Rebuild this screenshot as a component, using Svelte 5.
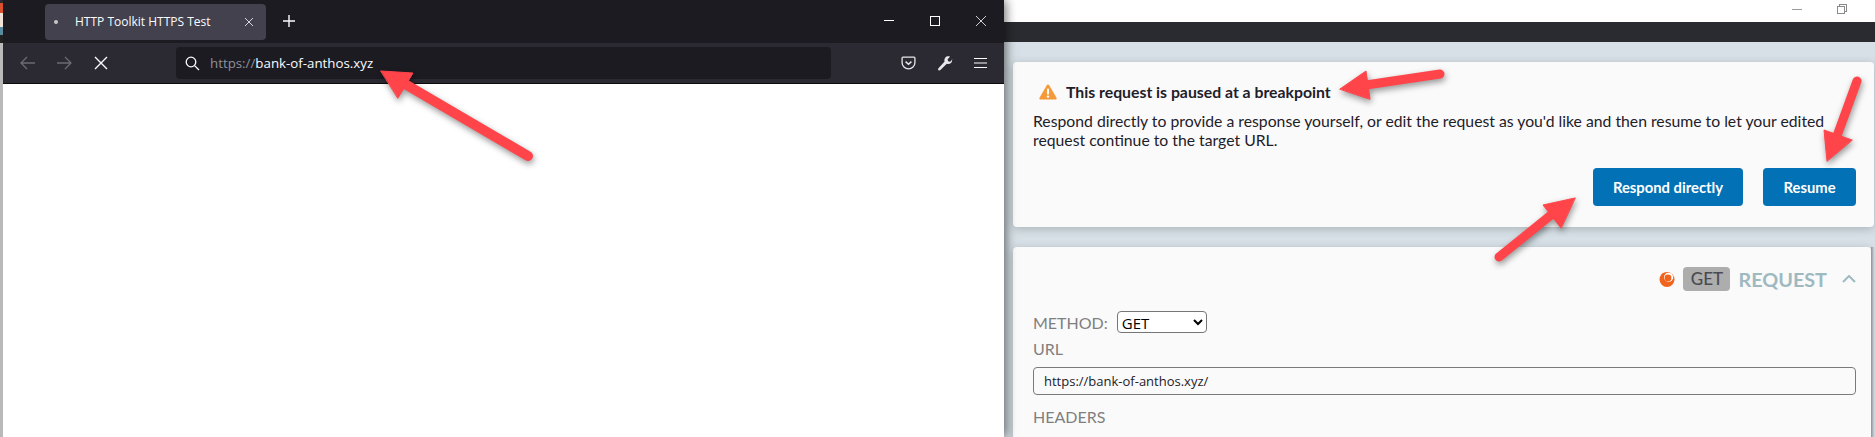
<script>
  let url = 'https://bank-of-anthos.xyz/';
</script>

<div class="screen">
  <div class="browser">
    <div class="edge"><span class="edge-mark"></span></div>
    <div class="window">
      <div class="titlebar">
        <div class="tab">
          <span class="tab-dot"></span>
          <span class="tab-title">HTTP Toolkit HTTPS Test</span>
          <svg class="tab-close" width="10" height="10" viewBox="0 0 10 10" fill="none" stroke="#d8d8dc" stroke-width="1"><path d="M1 1l8 8M9 1l-8 8"/></svg>
        </div>
        <svg class="new-tab" width="12" height="12" viewBox="0 0 12 12" fill="none" stroke="#fbfbfe" stroke-width="1.4"><path d="M6 0v12M0 6h12"/></svg>
        <div class="win-controls">
          <svg width="10" height="10" viewBox="0 0 10 10" fill="none" stroke="#fff"><path d="M0 4.5h10"/></svg>
          <svg width="10" height="10" viewBox="0 0 10 10" fill="none" stroke="#fff"><rect x=".5" y=".5" width="9" height="9"/></svg>
          <svg width="10" height="10" viewBox="0 0 10 10" fill="none" stroke="#fff" stroke-width=".8"><path d="M0 0l10 10M10 0L0 10"/></svg>
        </div>
      </div>
      <div class="toolbar">
        <svg class="nav-icon" width="16" height="14" viewBox="0 0 16 14" fill="none" stroke="#6b6b72" stroke-width="1.3"><path d="M15 7H1M7 1L1 7l6 6"/></svg>
        <svg class="nav-icon" width="16" height="14" viewBox="0 0 16 14" fill="none" stroke="#6b6b72" stroke-width="1.3"><path d="M1 7h14M9 1l6 6-6 6"/></svg>
        <svg class="nav-icon" width="14" height="14" viewBox="0 0 14 14" fill="none" stroke="#fbfbfe" stroke-width="1.4"><path d="M1 1l12 12M13 1L1 13"/></svg>
        <div class="urlbar">
          <svg width="15" height="15" viewBox="0 0 15 15" fill="none" stroke="#fbfbfe" stroke-width="1.3"><circle cx="6" cy="6" r="4.8"/><path d="M9.6 9.6L14 14"/></svg>
          <span class="url-text"><span class="scheme">https://</span>bank-of-anthos.xyz</span>
        </div>
        <div class="tools">
          <svg width="15" height="15" viewBox="0 0 15 15" fill="none" stroke="#e8e8ec" stroke-width="1.3"><path d="M2 1.2h11c.6 0 .9.4.9.9v4.6c0 3.4-2.900 6.100-6.400 6.100S1.100 10.100 1.100 6.700V2.100c0-.5.3-.9.900-.9z"/><path d="M4.600 5.600l2.900 2.700 2.900-2.700" stroke-width="1.500"/></svg>
          <svg width="15" height="15" viewBox="0 0 15 15" fill="#e8e8ec"><path d="M14.600 3.300l-2.500 2.400-2-.5-.5-2L12 .7C10.300 0 8.300.4 7.200 1.800 6.300 2.900 6.100 4.300 6.600 5.600L.5 12.300c-.6.700-.5 1.400 0 1.900s1.300.5 1.900-.1l6.400-6.300c1.500.6 3.200.2 4.400-1 1-1 1.200-2.900.4-3.500z"/></svg>
          <svg width="13" height="12" viewBox="0 0 13 12" fill="none" stroke="#fbfbfe" stroke-width="1.200"><path d="M0 1.500h13M0 6h13M0 10.500h13"/></svg>
        </div>
      </div>
      <div class="page"></div>
    </div>
  </div>

  <div class="app">
    <div class="app-title">
      <svg width="10" height="1" viewBox="0 0 10 1"><path d="M0 .5h10" stroke="#9a9a9a"/></svg>
      <svg width="10" height="10" viewBox="0 0 10 10" fill="#fff" stroke="#8a8a8a"><rect x="2.500" y=".5" width="7" height="7"/><rect x=".5" y="2.500" width="7" height="7"/></svg>
    </div>
    <div class="app-bar"></div>
    <div class="app-content">
      <section class="card notice">
        <h2>
          <svg width="18" height="16" viewBox="0 0 18 16"><path d="M9 .6c.5 0 .9.3 1.200.7l7.300 12.400c.5.900-.1 1.900-1.200 1.900H1.700c-1.100 0-1.700-1-1.200-1.900L7.800 1.300C8.100.9 8.500.6 9 .6z" fill="#f59a3a"/><rect x="8" y="4.500" width="2" height="6" rx=".8" fill="#fff"/><circle cx="9" cy="12.600" r="1.200" fill="#fff"/></svg>
          This request is paused at a breakpoint
        </h2>
        <p>Respond directly to provide a response yourself, or edit the request as you'd like and then resume to let your edited request continue to the target URL.</p>
        <div class="actions">
          <button class="respond">Respond directly</button>
          <button class="resume">Resume</button>
        </div>
      </section>

      <div class="request-row">
        <section class="card request">
          <header>
            <svg width="16" height="16" viewBox="0 0 16 16"><circle cx="8" cy="8.500" r="7.500" fill="#f1641e"/><circle cx="9.600" cy="6.300" r="4.600" fill="#fff"/><circle cx="9" cy="7" r="3.400" fill="#f1641e"/><circle cx="4" cy="3.500" r="1.200" fill="#f1641e"/></svg>
            <span class="method-pill">GET</span>
            <span class="request-title">REQUEST</span>
            <svg class="chevron" width="14" height="8" viewBox="0 0 14 8" fill="none" stroke="#9fb9c1" stroke-width="2"><path d="M1 7l6-6 6 6"/></svg>
          </header>
          <div class="method-row">
            <label for="method">METHOD:</label>
            <select id="method"><option>GET</option><option>POST</option></select>
          </div>
          <div class="label">URL</div>
          <input type="text" bind:value={url} />
          <div class="label headers">HEADERS</div>
        </section>
        <div class="scroll-edge"></div>
      </div>
    </div>
  </div>

  <svg class="arrows" width="1875" height="437" viewBox="0 0 1875 437">
    <g fill="#ff444a" stroke="#ff444a" stroke-linecap="round" stroke-linejoin="round">
      <path d="M528 156L405 84" stroke-width="10" fill="none"/>
      <path d="M381 71l32 2-15 25z" stroke-width="1"/>
      <path d="M1440 74l-74 11" stroke-width="9" fill="none"/>
      <path d="M1340 89l26-18 4 28z" stroke-width="1"/>
      <path d="M1857 81l-20 55" stroke-width="9" fill="none"/>
      <path d="M1827 161l-3-31 28 10z" stroke-width="1"/>
      <path d="M1499 257l52-42" stroke-width="9" fill="none"/>
      <path d="M1575 198l-32 7 18 23z" stroke-width="1"/>
    </g>
  </svg>
</div>

<style>
  :global(body) {
    margin: 0;
    background: #fff;
  }

  .screen {
    position: relative;
    display: flex;
    width: 1875px;
    height: 437px;
    overflow: hidden;
    font-family: Lato, "Open Sans", sans-serif;
  }

  /* browser window on the left */
  .browser {
    position: relative;
    z-index: 2;
    display: flex;
    flex: 0 0 1004px;
    box-shadow: 2px 0 10px rgba(0, 0, 0, 0.55);
  }

  .edge {
    flex: 0 0 3px;
    background: #b9b9b9;
  }

  .edge-mark {
    display: block;
    height: 43px;
    background: linear-gradient(#2a2a2e 0 3px, #d8502c 3px 13px, #f0e4d8 13px 27px, #5a8aa0 27px 35px, #222 35px);
  }

  .window {
    flex: 1;
    display: flex;
    flex-direction: column;
    min-width: 0;
  }

  .titlebar {
    display: flex;
    align-items: center;
    height: 43px;
    padding-left: 42px;
    padding-bottom: 1px;
    box-sizing: border-box;
    background: #1c1b22;
  }

  .tab {
    display: flex;
    align-items: center;
    width: 221px;
    height: 36px;
    margin-top: 1px;
    border-radius: 4px;
    background: #42414d;
    color: #fbfbfe;
    font-family: "Open Sans", sans-serif;
    font-size: 12px;
    box-sizing: border-box;
    padding: 0 0 0 9px;
  }

  .tab-dot {
    width: 4px;
    height: 4px;
    border-radius: 50%;
    background: #c8c8cc;
    margin-right: 17px;
  }

  .tab-title {
    flex: 1;
  }

  .tab-close {
    margin-right: 12px;
  }

  .new-tab {
    margin-left: 17px;
  }

  .win-controls {
    display: flex;
    align-items: center;
    gap: 36px;
    margin-left: auto;
    margin-right: 18px;
  }

  .toolbar {
    display: flex;
    align-items: center;
    height: 41px;
    box-sizing: border-box;
    border-bottom: 1px solid #0c0c0d;
    background: #2b2a33;
    padding-left: 17px;
  }

  .nav-icon {
    margin-right: 20px;
  }

  .nav-icon:nth-child(3) {
    margin-right: 0;
    margin-left: 2px;
  }

  .urlbar {
    display: flex;
    align-items: center;
    gap: 10px;
    width: 655px;
    height: 32px;
    margin-left: 68px;
    padding-left: 9px;
    box-sizing: border-box;
    border-radius: 4px;
    background: #1c1b22;
    color: #fbfbfe;
    font-family: "Open Sans", sans-serif;
    font-size: 13.300px;
  }

  .scheme {
    color: #8f8f9d;
  }

  .tools {
    display: flex;
    align-items: center;
    gap: 21.500px;
    margin-left: auto;
    margin-right: 17px;
  }

  .page {
    flex: 1;
    background: #fff;
  }

  /* http toolkit on the right */
  .app {
    flex: 1;
    display: flex;
    flex-direction: column;
    min-width: 0;
    background: #d6e0e6;
  }

  .app-title {
    display: flex;
    align-items: center;
    justify-content: flex-end;
    gap: 35px;
    height: 22px;
    padding: 0 28px 4px 0;
    box-sizing: border-box;
    background: #fff;
  }

  .app-bar {
    height: 20px;
    background: #2a2b30;
  }

  .app-content {
    flex: 1;
    padding: 20px 1px 0 9px;
    min-height: 0;
  }

  .card {
    border-radius: 4px;
    background: #fafafa;
    box-shadow: 0 2px 10px rgba(0, 0, 0, 0.2);
    color: #1e2029;
    box-sizing: border-box;
  }

  .notice {
    height: 165px;
    padding: 20px 18px 0 20px;
  }

  .notice h2 {
    display: flex;
    align-items: center;
    gap: 9px;
    margin: 0 0 0 6px;
    font-size: 15.800px;
    font-weight: 700;
    line-height: 20px;
  }

  .notice p {
    margin: 9px 0 0;
    font-size: 15.750px;
    line-height: 19px;
  }

  .actions {
    display: flex;
    justify-content: flex-end;
    gap: 20px;
    margin-top: 19px;
  }

  .actions button {
    height: 38px;
    border: none;
    border-radius: 4px;
    background: #0271b5;
    color: #fff;
    font-family: inherit;
    font-size: 14.800px;
    font-weight: 700;
    padding: 0;
  }

  .respond {
    width: 150px;
  }

  .resume {
    width: 93px;
  }

  .request-row {
    display: flex;
    margin-top: 20px;
    height: 300px;
  }

  .request {
    flex: 1;
    padding: 20px 15px 0 20px;
  }

  .scroll-edge {
    flex: 0 0 3px;
    background: linear-gradient(90deg, #8a9296, #c7d0d5);
  }

  .request header {
    display: flex;
    align-items: center;
    justify-content: flex-end;
    height: 24px;
  }

  .method-pill {
    width: 47px;
    height: 24px;
    margin-left: 8px;
    border-radius: 4px;
    background: #adadad;
    color: #4a4a50;
    font-size: 17px;
    font-weight: 500;
    line-height: 24px;
    text-align: center;
  }

  .request-title {
    margin-left: 8px;
    color: #9fb9c1;
    font-size: 19.800px;
    font-weight: 700;
  }

  .chevron {
    margin-left: 15px;
  }

  .method-row {
    display: flex;
    align-items: center;
    gap: 9px;
    height: 22px;
    margin-top: 20px;
  }

  .method-row label,
  .label {
    color: #7f7f7f;
    font-size: 16px;
  }

  select {
    width: 90px;
    height: 22px;
    font-family: "Open Sans", sans-serif;
    font-size: 15px;
    background: #fff;
    color: #000;
    border: 1px solid #767676;
    border-radius: 4px;
  }

  .label {
    margin-top: 6px;
    line-height: 20px;
  }

  input {
    display: block;
    width: 100%;
    height: 28px;
    margin-top: 8px;
    padding: 0 10px;
    box-sizing: border-box;
    border: 1px solid #7a7a7a;
    border-radius: 4px;
    background: #fafafa;
    color: #1e2029;
    font-family: "Open Sans", sans-serif;
    font-size: 13px;
  }

  .headers {
    margin-top: 12px;
  }

  .arrows {
    position: absolute;
    inset: 0;
    z-index: 3;
    pointer-events: none;
    filter: drop-shadow(1px 3px 3px rgba(0, 0, 0, 0.4));
  }
</style>
